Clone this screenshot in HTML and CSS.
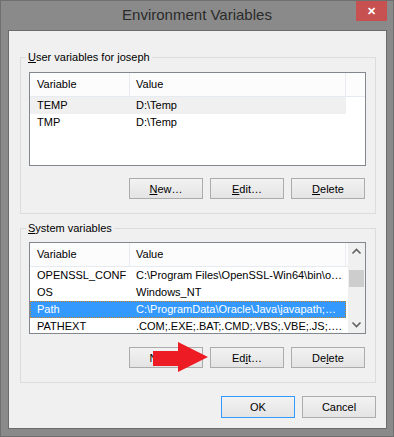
FILE: index.html
```html
<!DOCTYPE html>
<html lang="en">
<head>
    <meta charset="UTF-8">
    <meta name="viewport" content="width=device-width, initial-scale=1.0">
    <title>Environment Variables</title>
    <link rel="stylesheet" href="styles.css">
</head>
<body>

<div class="window">
    <div class="titlebar">
        <span class="title">Environment Variables</span>
        <div class="close">&#x2715;</div>
    </div>

    <div class="client">
        <div class="group">
            <div class="group-title"><u>U</u>ser variables for joseph</div>
            <div class="list list-user">
                <div class="list-head">
                    <div class="col1">Variable</div>
                    <div class="col2">Value</div>
                    <div class="filler"></div>
                </div>
                <div class="row inactive">
                    <div class="col1">TEMP</div>
                    <div class="col2">D:\Temp</div>
                </div>
                <div class="row">
                    <div class="col1">TMP</div>
                    <div class="col2">D:\Temp</div>
                </div>
            </div>
            <div class="buttons">
                <button><u>N</u>ew…</button>
                <button><u>E</u>dit…</button>
                <button><u>D</u>elete</button>
            </div>
        </div>

        <div class="group group-system">
            <div class="group-title"><u>S</u>ystem variables</div>
            <div class="list list-system">
                <div class="list-body">
                    <div class="list-head">
                        <div class="col1">Variable</div>
                        <div class="col2">Value</div>
                    </div>
                    <div class="row">
                        <div class="col1">OPENSSL_CONF</div>
                        <div class="col2">C:\Program Files\OpenSSL-Win64\bin\o…</div>
                    </div>
                    <div class="row">
                        <div class="col1">OS</div>
                        <div class="col2">Windows_NT</div>
                    </div>
                    <div class="row selected">
                        <div class="col1">Path</div>
                        <div class="col2">C:\ProgramData\Oracle\Java\javapath;…</div>
                    </div>
                    <div class="row">
                        <div class="col1">PATHEXT</div>
                        <div class="col2">.COM;.EXE;.BAT;.CMD;.VBS;.VBE;.JS;….</div>
                    </div>
                </div>
                <div class="scrollbar">
                    <svg class="sb-arrow" width="17" height="17" viewBox="0 0 17 17"><path d="M4.5 10.5 L8.5 6.5 L12.5 10.5" fill="none" stroke="#606060" stroke-width="1.6"/></svg>
                    <div class="sb-track"><div class="sb-thumb"></div></div>
                    <svg class="sb-arrow" width="17" height="17" viewBox="0 0 17 17"><path d="M4.5 6.5 L8.5 10.5 L12.5 6.5" fill="none" stroke="#606060" stroke-width="1.6"/></svg>
                </div>
            </div>
            <div class="buttons">
                <button>Ne<u>w</u>…</button>
                <button>Ed<u>i</u>t…</button>
                <button>De<u>l</u>ete</button>
            </div>
        </div>

        <div class="footer">
            <button class="default">OK</button>
            <button>Cancel</button>
        </div>
    </div>

    <!-- red annotation arrow -->
    <svg class="red-arrow" width="60" height="34" viewBox="0 0 60 34">
        <polygon points="0,9 25,9 25,0 55,15 25,30 25,24 0,24" fill="#ed1c24"/>
    </svg>
</div>

</body>
</html>
```

FILE: styles.css
```css
* {
    box-sizing: border-box;
    margin: 0;
    padding: 0;
}

body {
    font-family: "Liberation Sans", Arial, sans-serif;
    font-size: 11px;
    color: #000;
    background: #898989;
}

.window {
    position: relative;
    width: 394px;
    height: 437px;
    background: #8a8a8a;
    box-shadow: inset 0 0 0 1px #6f6f6f;
}

/* Title bar */
.titlebar {
    position: relative;
    height: 30px;
    text-align: center;
}

.title {
    display: inline-block;
    padding-top: 6px;
    font-size: 15px;
    line-height: 18px;
    color: #2b2b2b;
}

.close {
    position: absolute;
    top: 1px;
    right: 7px;
    width: 31px;
    height: 20px;
    background: #c75050;
    color: #fff;
    font-size: 11px;
    font-weight: bold;
    line-height: 20px;
    text-align: center;
}

/* Client area */
.client {
    margin-left: 8px;
    width: 379px;
    height: 399px;
    background: #f0f0f0;
    border: 1px solid #6c6c6c;
    overflow: hidden;
}

.group {
    margin: 26px 10px 0 11px;
    border: 1px solid #dcdcdc;
    padding-bottom: 14px;
}

.group-system {
    margin-top: 14px;
}

.group-title {
    width: fit-content;
    margin: -8px 0 0 5px;
    padding: 0 2px;
    line-height: 15px;
    background: #f0f0f0;
    color: #000;
}

/* List views */
.list {
    margin: 7px 9px 0 8px;
    height: 94px;
    background: #fff;
    border: 1px solid #828790;
    overflow: hidden;
}

.list-system {
    display: flex;
    margin-top: 6px;
    height: 92px;
}

.list-body {
    width: 318px;
}

.list-head {
    display: flex;
    height: 24px;
    background: #fcfcfc;
    border-bottom: 1px solid #e6ebf2;
    line-height: 23px;
}

.list-head .col1 {
    border-right: 1px solid #e8ecf1;
}

.list-head .col2 {
    border-right: 1px solid #e8ecf1;
}

.list-system .list-head .col2 {
    border-right: 1px solid #e8ecf1;
}

.filler {
    flex: 1;
    border-bottom: 0;
}

.col1 {
    width: 100px;
    padding-left: 7px;
    white-space: nowrap;
    overflow: hidden;
}

.col2 {
    width: 216px;
    padding-left: 6px;
    white-space: nowrap;
    overflow: hidden;
}

.row {
    display: flex;
    width: 316px;
    height: 17px;
    line-height: 17px;
}

.row.inactive {
    background: #f0f0f0;
}

.row.selected {
    background: #3399ff;
    color: #fff;
    outline: 1px dotted #c9832f;
    outline-offset: -1px;
}

/* Scrollbar */
.scrollbar {
    display: flex;
    flex-direction: column;
    width: 17px;
    margin-left: auto;
    background: #f0f0f0;
}

.sb-arrow {
    display: block;
    flex: none;
}

.sb-track {
    flex: 1;
    padding-top: 10px;
}

.sb-thumb {
    width: 15px;
    height: 17px;
    margin-left: 1px;
    background: #cdcdcd;
}

/* Buttons */
.buttons {
    display: flex;
    justify-content: flex-end;
    gap: 7px;
    margin-top: 12px;
    padding-right: 10px;
}

.group-system .buttons {
    margin-top: 13px;
}

button {
    width: 74px;
    height: 21px;
    font-family: "Liberation Sans", Arial, sans-serif;
    font-size: 11px;
    color: #000;
    background: linear-gradient(#f2f2f2, #e4e4e4);
    border: 1px solid #acacac;
}

button.default {
    border-color: #3399ff;
}

.footer {
    display: flex;
    justify-content: flex-end;
    gap: 7px;
    margin-top: 13px;
    padding-right: 10px;
}

.footer button {
    height: 22px;
}

/* Annotation */
.red-arrow {
    position: absolute;
    left: 153px;
    top: 342px;
}
```
